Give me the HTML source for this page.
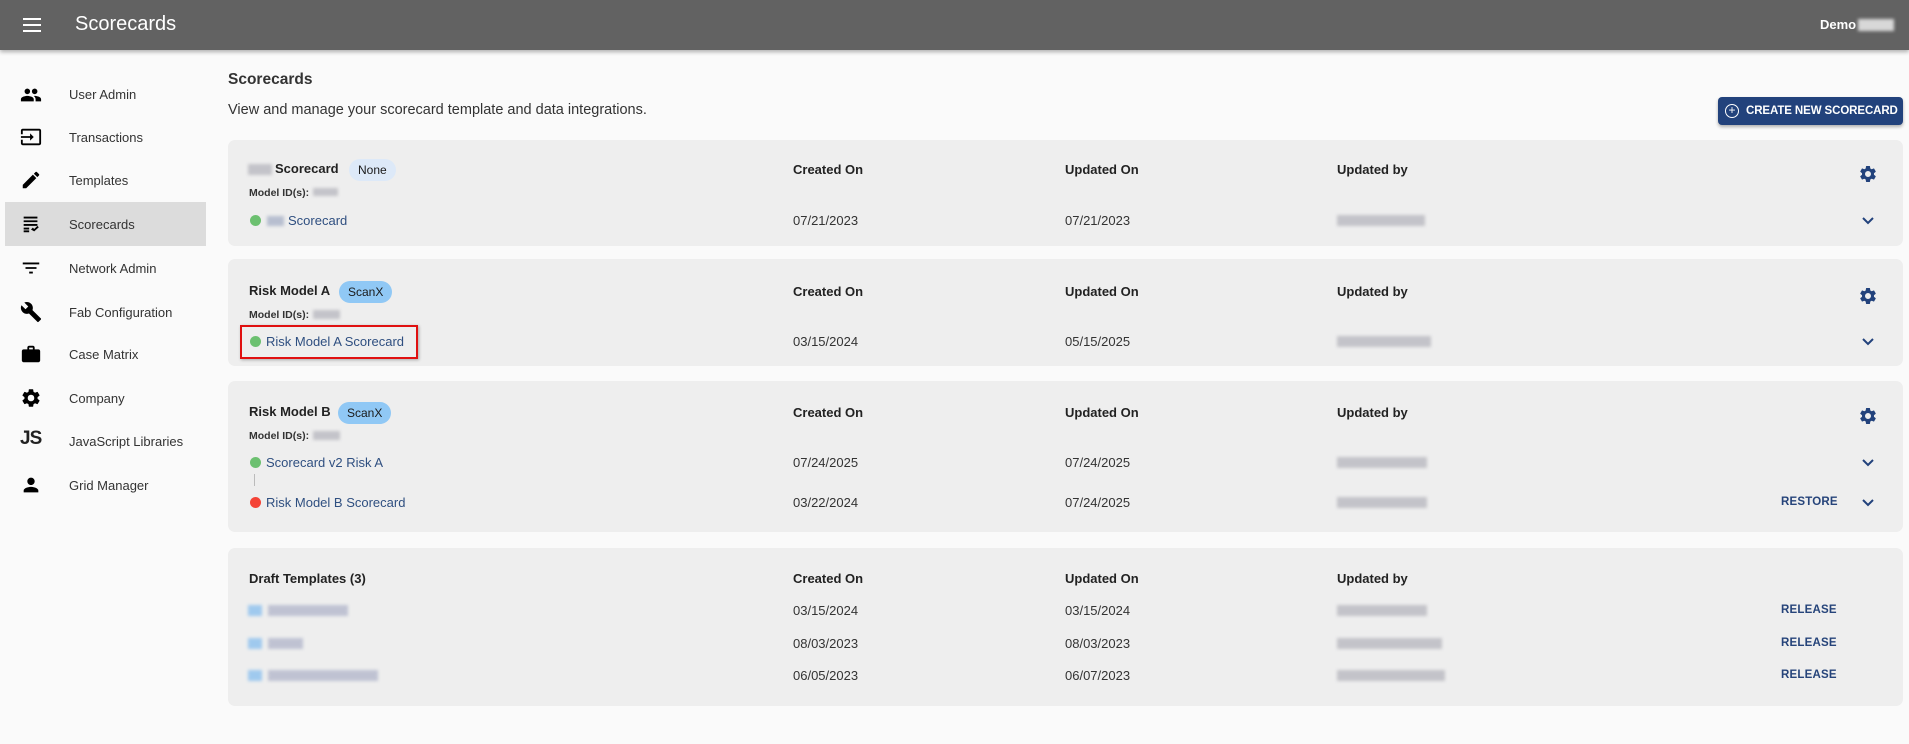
<!DOCTYPE html>
<html><head><meta charset="utf-8"><style>
*{box-sizing:border-box;margin:0;padding:0}
body{width:1909px;height:744px;background:#fafafa;font-family:"Liberation Sans",sans-serif;color:#222;position:relative;overflow:hidden;font-size:13px}
.hdr{position:absolute;left:0;top:0;width:1909px;height:50px;background:#626262;box-shadow:0 2px 4px rgba(0,0,0,.3);color:#fff}
.abs{position:absolute;white-space:nowrap}
.nav{position:absolute;left:69px;font-size:13px;color:#333}
.ico{position:absolute;left:20px;width:22px;height:22px}
.card{position:absolute;left:228px;width:1675px;background:#eeeeee;border-radius:7px}
.t{position:absolute;font-size:13px;font-weight:bold;color:#222}
.h{position:absolute;font-size:13px;font-weight:bold;color:#222}
.v{position:absolute;font-size:13px;color:#333}
.lnk{position:absolute;font-size:13px;color:#2f4f80}
.mid{position:absolute;font-size:10.5px;font-weight:bold;color:#333}
.dot{position:absolute;width:11px;height:11px;border-radius:50%}
.pill{position:absolute;height:22px;border-radius:11px;font-size:12px;line-height:22px;padding:0 9px;color:#1a1a1a}
.blur{position:absolute;height:11px;background:#b9b9c0;filter:blur(1.5px);opacity:.8}
.gear{position:absolute;width:20px;height:20px}
.chev{position:absolute;width:14px;height:10px}
.act{position:absolute;font-size:11.5px;font-weight:bold;color:#26447a;letter-spacing:.2px}
</style></head><body>
<div class="hdr">
 <svg class="abs" style="left:23px;top:17px" width="20" height="16" viewBox="0 0 20 16"><rect y="1" width="18" height="2" fill="#fff"/><rect y="7" width="18" height="2" fill="#fff"/><rect y="13" width="18" height="2" fill="#fff"/></svg>
 <div class="abs" style="left:75px;top:13px;font-size:20px">Scorecards</div>
 <div class="abs" style="left:1820px;top:17px;font-size:13px;font-weight:bold">Demo</div>
 <div class="abs" style="left:1858px;top:19px;width:36px;height:12px;background:#d8d8d8;filter:blur(1.5px)"></div>
</div>

<div class="abs" style="left:5px;top:202px;width:201px;height:44px;background:#dcdcdc"></div>
<svg class="ico" style="top:84px" viewBox="0 0 24 24"><path d="M16 11c1.66 0 3-1.34 3-3s-1.34-3-3-3-3 1.34-3 3 1.34 3 3 3zm-8 0c1.66 0 3-1.34 3-3S9.66 5 8 5 5 6.34 5 8s1.34 3 3 3zm0 2c-2.33 0-7 1.170-7 3.5V19h14v-2.5c0-2.33-4.67-3.5-7-3.5zm8 0c-.29 0-.62.02-.97.05 1.16.84 1.97 1.97 1.97 3.45V19h6v-2.5c0-2.33-4.67-3.5-7-3.5z"/></svg>
<div class="nav" style="top:87px">User Admin</div>
<svg class="ico" style="top:126px" viewBox="0 0 24 24"><path d="M21 3.01H3c-1.1 0-2 .9-2 2V9h2V4.99h18v14.03H3V15H1v4.01c0 1.1.9 1.98 2 1.98h18c1.1 0 2-.88 2-1.98v-14c0-1.11-.9-2-2-2zM11 16l4-4-4-4v3H1v2h10v3z"/></svg>
<div class="nav" style="top:130px">Transactions</div>
<svg class="ico" style="top:169px" viewBox="0 0 24 24"><path d="M3 17.25V21h3.75L17.81 9.94l-3.75-3.75L3 17.25zM20.71 7.04a1 1 0 000-1.41l-2.34-2.34a1 1 0 00-1.41 0l-1.83 1.83 3.75 3.75 1.83-1.830z"/></svg>
<div class="nav" style="top:173px">Templates</div>
<svg class="ico" style="top:213px" viewBox="0 0 24 24"><path d="M4 4h15v2H4zM4 8h15v2H4zM4 12h15v2H4zM4 16h6v2H4zM4 19h6v2H4zM12 18l2-2 1.5 1.5L19 14l1.5 1.5L15.5 20z"/></svg>
<div class="nav" style="top:217px">Scorecards</div>
<svg class="ico" style="top:257px" viewBox="0 0 24 24"><path d="M3 6h18v2H3zM6 11h12v2H6zM10 16h4v2h-4z"/></svg>
<div class="nav" style="top:261px">Network Admin</div>
<svg class="ico" style="top:301px" viewBox="0 0 24 24"><path d="M22.7 19l-9.1-9.1c.9-2.3.4-5-1.5-6.9-2-2-5-2.4-7.4-1.3L9 6 6 9 1.6 4.7C.4 7.1.9 10.1 2.9 12.1c1.9 1.9 4.6 2.4 6.9 1.5l9.1 9.1c.4.4 1 .4 1.4 0l2.3-2.3c.5-.4.5-1.1.1-1.4z"/></svg>
<div class="nav" style="top:305px">Fab Configuration</div>
<svg class="ico" style="top:343px" viewBox="0 0 24 24"><path d="M20 7h-4V5c0-1.1-.9-2-2-2h-4c-1.1 0-2 .9-2 2v2H4c-1.1 0-2 .9-2 2v10c0 1.1.9 2 2 2h16c1.1 0 2-.9 2-2V9c0-1.1-.9-2-2-2zM14 7h-4V5h4z"/></svg>
<div class="nav" style="top:347px">Case Matrix</div>
<svg class="ico" style="top:387px" viewBox="0 0 24 24"><path d="M19.14 12.94c.04-.3.06-.61.06-.94 0-.32-.02-.64-.07-.94l2.03-1.58a.49.49 0 00.12-.61l-1.92-3.32a.49.49 0 00-.59-.22l-2.39.96c-.5-.38-1.03-.7-1.62-.94l-.36-2.54a.48.48 0 00-.48-.41h-3.84c-.24 0-.43.17-.47.41l-.36 2.54c-.59.24-1.13.57-1.62.94l-2.39-.96a.48.48 0 00-.59.22L2.74 8.87c-.12.21-.08.47.12.61l2.03 1.58c-.05.3-.09.63-.09.94s.02.64.07.94l-2.03 1.58a.49.49 0 00-.12.61l1.92 3.32c.12.22.37.29.59.22l2.39-.96c.5.38 1.03.7 1.62.94l.36 2.54c.05.24.24.41.48.41h3.84c.24 0 .44-.17.47-.41l.36-2.54c.59-.24 1.13-.56 1.62-.94l2.39.96c.22.08.47 0 .59-.22l1.92-3.32c.12-.22.07-.47-.12-.61l-2.01-1.58zM12 15.6A3.6 3.6 0 1112 8.4a3.6 3.6 0 010 7.2z"/></svg>
<div class="nav" style="top:391px">Company</div>
<div class="abs" style="left:20px;top:428px;font-size:19px;font-weight:bold;letter-spacing:-1px">JS</div>
<div class="nav" style="top:434px">JavaScript Libraries</div>
<svg class="ico" style="top:474px" viewBox="0 0 24 24"><path d="M12 12c2.21 0 4-1.790 4-4s-1.79-4-4-4-4 1.79-4 4 1.79 4 4 4zm0 2c-2.67 0-8 1.34-8 4v2h16v-2c0-2.66-5.33-4-8-4z"/></svg>
<div class="nav" style="top:478px">Grid Manager</div>

<div class="abs" style="left:228px;top:71px;font-size:15.5px;font-weight:bold;color:#333">Scorecards</div>
<div class="abs" style="left:228px;top:102px;font-size:14.5px;color:#333">View and manage your scorecard template and data integrations.</div>
<div class="abs" style="left:1718px;top:97px;width:185px;height:28px;background:#22427c;border-radius:4px;box-shadow:0 2px 3px rgba(0,0,0,.3);color:#fff;font-size:11.5px;font-weight:bold;line-height:28px;padding-left:28px;letter-spacing:-.1px">CREATE NEW SCORECARD</div>
<div class="abs" style="left:1725px;top:104px;width:14px;height:14px;border:1.5px solid #fff;border-radius:50%;color:#fff;font-size:12px;line-height:11px;text-align:center">+</div>

<!-- card1 -->
<div class="card" style="top:140px;height:106px"></div>
<div class="blur" style="left:248px;top:164px;width:24px"></div>
<div class="t" style="left:275px;top:161px">Scorecard</div>
<div class="pill" style="left:349px;top:159px;background:#dde9f8">None</div>
<div class="mid" style="left:249px;top:187px">Model ID(s):</div><div class="blur" style="left:313px;top:188px;width:25px;height:8px"></div>
<div class="dot" style="left:250px;top:215px;background:#6cc070"></div>
<div class="blur" style="left:267px;top:216px;width:17px;height:10px;background:#aab3c8"></div>
<div class="lnk" style="left:288px;top:213px">Scorecard</div>
<div class="h" style="left:793px;top:162px">Created On</div>
<div class="h" style="left:1065px;top:162px">Updated On</div>
<div class="h" style="left:1337px;top:162px">Updated by</div>
<div class="v" style="left:793px;top:213px">07/21/2023</div>
<div class="v" style="left:1065px;top:213px">07/21/2023</div>
<div class="blur" style="left:1337px;top:215px;width:88px"></div>

<!-- card2 -->
<div class="card" style="top:259px;height:107px"></div>
<div class="t" style="left:249px;top:283px">Risk Model A</div>
<div class="pill" style="left:339px;top:281px;background:#90c8f5">ScanX</div>
<div class="mid" style="left:249px;top:309px">Model ID(s):</div><div class="blur" style="left:313px;top:310px;width:27px;height:9px"></div>
<div class="abs" style="left:240px;top:325px;width:178px;height:34px;border:2px solid #e01010;box-shadow:1px 1px 3px rgba(0,0,0,.3)"></div>
<div class="dot" style="left:250px;top:336px;background:#6cc070"></div>
<div class="lnk" style="left:266px;top:334px">Risk Model A Scorecard</div>
<div class="h" style="left:793px;top:284px">Created On</div>
<div class="h" style="left:1065px;top:284px">Updated On</div>
<div class="h" style="left:1337px;top:284px">Updated by</div>
<div class="v" style="left:793px;top:334px">03/15/2024</div>
<div class="v" style="left:1065px;top:334px">05/15/2025</div>
<div class="blur" style="left:1337px;top:336px;width:94px"></div>

<!-- card3 -->
<div class="card" style="top:381px;height:151px"></div>
<div class="t" style="left:249px;top:404px">Risk Model B</div>
<div class="pill" style="left:338px;top:402px;background:#90c8f5">ScanX</div>
<div class="mid" style="left:249px;top:430px">Model ID(s):</div><div class="blur" style="left:313px;top:431px;width:27px;height:9px"></div>
<div class="dot" style="left:250px;top:457px;background:#6cc070"></div>
<div class="lnk" style="left:266px;top:455px">Scorecard v2 Risk A</div>
<div class="abs" style="left:254px;top:474px;width:1px;height:12px;background:#bbb"></div>
<div class="dot" style="left:250px;top:497px;background:#f44336"></div>
<div class="lnk" style="left:266px;top:495px">Risk Model B Scorecard</div>
<div class="h" style="left:793px;top:405px">Created On</div>
<div class="h" style="left:1065px;top:405px">Updated On</div>
<div class="h" style="left:1337px;top:405px">Updated by</div>
<div class="v" style="left:793px;top:455px">07/24/2025</div>
<div class="v" style="left:1065px;top:455px">07/24/2025</div>
<div class="v" style="left:793px;top:495px">03/22/2024</div>
<div class="v" style="left:1065px;top:495px">07/24/2025</div>
<div class="blur" style="left:1337px;top:457px;width:90px"></div>
<div class="blur" style="left:1337px;top:497px;width:90px"></div>
<div class="act" style="left:1781px;top:496px">RESTORE</div>

<!-- card4 -->
<div class="card" style="top:548px;height:158px"></div>
<div class="t" style="left:249px;top:571px">Draft Templates (3)</div>
<div class="h" style="left:793px;top:571px">Created On</div>
<div class="h" style="left:1065px;top:571px">Updated On</div>
<div class="h" style="left:1337px;top:571px">Updated by</div>
<div class="blur" style="left:248px;top:605px;width:14px;background:#8cc0ee"></div><div class="blur" style="left:268px;top:605px;width:80px;background:#b4b8cc"></div>
<div class="blur" style="left:248px;top:638px;width:14px;background:#8cc0ee"></div><div class="blur" style="left:268px;top:638px;width:35px;background:#b4b8cc"></div>
<div class="blur" style="left:248px;top:670px;width:14px;background:#8cc0ee"></div><div class="blur" style="left:268px;top:670px;width:110px;background:#b4b8cc"></div>
<div class="v" style="left:793px;top:603px">03/15/2024</div><div class="v" style="left:1065px;top:603px">03/15/2024</div>
<div class="v" style="left:793px;top:636px">08/03/2023</div><div class="v" style="left:1065px;top:636px">08/03/2023</div>
<div class="v" style="left:793px;top:668px">06/05/2023</div><div class="v" style="left:1065px;top:668px">06/07/2023</div>
<div class="blur" style="left:1337px;top:605px;width:90px"></div>
<div class="blur" style="left:1337px;top:638px;width:105px"></div>
<div class="blur" style="left:1337px;top:670px;width:108px"></div>
<div class="act" style="left:1781px;top:604px">RELEASE</div>
<div class="act" style="left:1781px;top:637px">RELEASE</div>
<div class="act" style="left:1781px;top:669px">RELEASE</div>

<!-- gears & chevrons -->
<svg class="gear" style="left:1858px;top:164px" viewBox="0 0 24 24" fill="#22427c"><path d="M19.14 12.94c.04-.3.06-.61.06-.94 0-.32-.02-.64-.07-.94l2.03-1.58a.49.49 0 00.12-.61l-1.92-3.32a.49.49 0 00-.59-.22l-2.39.96c-.5-.38-1.03-.7-1.62-.94l-.36-2.54a.48.48 0 00-.48-.41h-3.84c-.24 0-.43.17-.47.41l-.36 2.54c-.59.24-1.13.57-1.62.94l-2.39-.96a.48.48 0 00-.59.22L2.74 8.87c-.12.21-.08.47.12.61l2.03 1.58c-.05.3-.09.63-.09.94s.02.64.07.94l-2.03 1.58a.49.49 0 00-.12.61l1.92 3.32c.12.22.37.29.59.22l2.39-.96c.5.38 1.03.7 1.62.94l.36 2.54c.05.24.24.41.48.41h3.84c.24 0 .44-.17.47-.41l.36-2.54c.59-.24 1.13-.56 1.62-.94l2.39.96c.22.08.47 0 .59-.22l1.92-3.32c.12-.22.07-.47-.12-.61l-2.01-1.58zM12 15.6A3.6 3.6 0 1112 8.4a3.6 3.6 0 010 7.2z"/></svg>
<svg class="gear" style="left:1858px;top:286px" viewBox="0 0 24 24" fill="#22427c"><path d="M19.14 12.94c.04-.3.06-.61.06-.94 0-.32-.02-.64-.07-.94l2.03-1.58a.49.49 0 00.12-.61l-1.92-3.32a.49.49 0 00-.59-.22l-2.39.96c-.5-.38-1.03-.7-1.62-.94l-.36-2.54a.48.48 0 00-.48-.41h-3.84c-.24 0-.43.17-.47.41l-.36 2.54c-.59.24-1.13.57-1.62.94l-2.39-.96a.48.48 0 00-.59.22L2.74 8.87c-.12.21-.08.47.12.61l2.03 1.58c-.05.3-.09.63-.09.94s.02.64.07.94l-2.03 1.58a.49.49 0 00-.12.61l1.92 3.32c.12.22.37.29.59.22l2.39-.96c.5.38 1.03.7 1.62.94l.36 2.54c.05.24.24.41.48.41h3.84c.24 0 .44-.17.47-.41l.36-2.54c.59-.24 1.13-.56 1.62-.94l2.39.96c.22.08.47 0 .59-.22l1.92-3.32c.12-.22.07-.47-.12-.61l-2.01-1.58zM12 15.6A3.6 3.6 0 1112 8.4a3.6 3.6 0 010 7.2z"/></svg>
<svg class="gear" style="left:1858px;top:406px" viewBox="0 0 24 24" fill="#22427c"><path d="M19.14 12.94c.04-.3.06-.61.06-.94 0-.32-.02-.64-.07-.94l2.03-1.58a.49.49 0 00.12-.61l-1.92-3.32a.49.49 0 00-.59-.22l-2.39.96c-.5-.38-1.03-.7-1.62-.94l-.36-2.54a.48.48 0 00-.48-.41h-3.84c-.24 0-.43.17-.47.41l-.36 2.54c-.59.24-1.13.57-1.62.94l-2.39-.96a.48.48 0 00-.59.22L2.74 8.87c-.12.21-.08.47.12.61l2.03 1.58c-.05.3-.09.63-.09.94s.02.64.07.94l-2.03 1.58a.49.49 0 00-.12.61l1.92 3.32c.12.22.37.29.59.22l2.39-.96c.5.38 1.03.7 1.62.94l.36 2.54c.05.24.24.41.48.41h3.84c.24 0 .44-.17.47-.41l.36-2.54c.59-.24 1.13-.56 1.62-.94l2.39.96c.22.08.47 0 .59-.22l1.92-3.32c.12-.22.07-.47-.12-.61l-2.01-1.58zM12 15.6A3.6 3.6 0 1112 8.4a3.6 3.6 0 010 7.2z"/></svg>
<svg class="chev" style="left:1861px;top:216px" viewBox="0 0 14 10"><path d="M2 2l5 5 5-5" stroke="#22427c" stroke-width="2" fill="none"/></svg>
<svg class="chev" style="left:1861px;top:337px" viewBox="0 0 14 10"><path d="M2 2l5 5 5-5" stroke="#22427c" stroke-width="2" fill="none"/></svg>
<svg class="chev" style="left:1861px;top:458px" viewBox="0 0 14 10"><path d="M2 2l5 5 5-5" stroke="#22427c" stroke-width="2" fill="none"/></svg>
<svg class="chev" style="left:1861px;top:498px" viewBox="0 0 14 10"><path d="M2 2l5 5 5-5" stroke="#22427c" stroke-width="2" fill="none"/></svg>
</body></html>
